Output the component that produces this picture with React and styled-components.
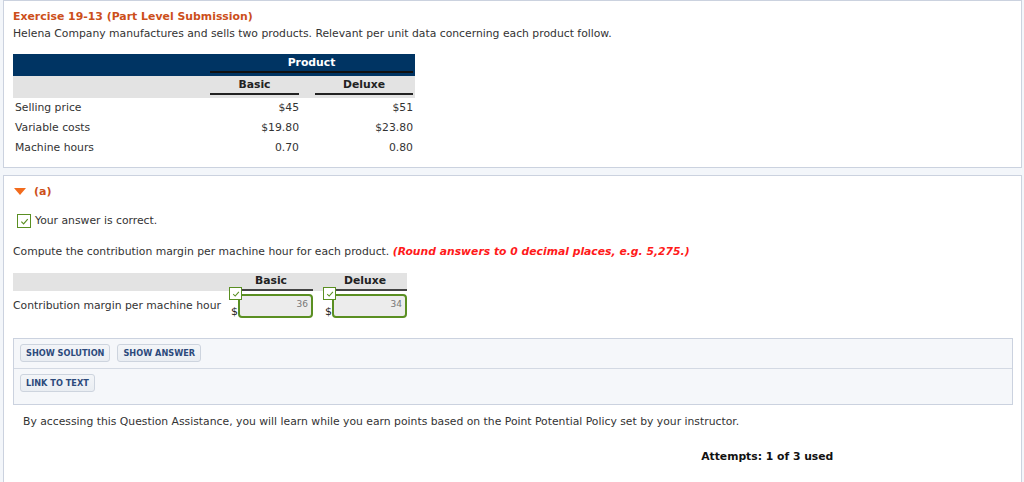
import React from "react";
import styled, { createGlobalStyle } from "styled-components";

const GlobalStyle = createGlobalStyle`
  html, body {
    margin: 0;
    background: #f3f6fa;
  }
  body {
    font-family: "DejaVu Sans", Verdana, sans-serif;
    font-size: 10.8px;
    color: #333;
  }
`;

const Page = styled.div`
  padding: 0 2px 0 3px;
  display: flex;
  flex-direction: column;
  gap: 7px;
`;

const Panel = styled.div`
  background: #fff;
  border: 1px solid #cbd2df;
  padding: ${(p) => p.$pad || "8px 9px 9px 9px"};
`;

const Title = styled.div`
  color: #cc4f1a;
  font-weight: bold;
  font-size: 10.9px;
  line-height: 16px;
`;

const Text = styled.div`
  line-height: 16px;
  margin-top: ${(p) => p.$mt || 0}px;
`;

const DataTable = styled.div`
  width: 402px;
  margin-top: 12px;
`;

const Row = styled.div`
  display: grid;
  grid-template-columns: 195px 89px 114px;
  background: ${(p) => p.$bg || "transparent"};
  height: ${(p) => p.$h || 20}px;
  line-height: ${(p) => p.$lh || 20}px;
  padding-left: 2px;
`;

const ProductCell = styled.div`
  grid-column: 2 / 4;
  text-align: center;
  color: #fff;
  font-weight: bold;
  line-height: 16px;
  padding-top: 1px;
  height: 16px;
  border-bottom: 2px solid #111;
`;

const HeadCell = styled.div`
  text-align: center;
  font-weight: bold;
  color: #222;
  line-height: 16px;
  padding-top: 1px;
  height: 16px;
  border-bottom: 2px solid #222;
  margin-left: ${(p) => (p.$gap ? 16 : 0)}px;
`;

const ValueCell = styled.div`
  text-align: right;
  margin-left: ${(p) => (p.$gap ? 16 : 0)}px;
`;

const PartHead = styled.div`
  display: flex;
  align-items: center;
  gap: 8px;
  height: 16px;
  margin-left: 1px;
`;

const Triangle = styled.span`
  width: 0;
  height: 0;
  border-left: 6px solid transparent;
  border-right: 6px solid transparent;
  border-top: 7px solid #f26b1d;
`;

const PartLabel = styled.span`
  color: #cc4f1a;
  font-weight: bold;
  font-size: 11px;
`;

const Correct = styled.div`
  display: flex;
  align-items: center;
  gap: 4px;
  margin-top: 14px;
  margin-left: 4px;
  line-height: 16px;
`;

const CheckBox = styled.span`
  display: inline-flex;
  align-items: center;
  justify-content: center;
  box-sizing: border-box;
  width: ${(p) => p.$size || 14}px;
  height: ${(p) => p.$size || 14}px;
  border: ${(p) => (p.$thin ? 1 : 1.5)}px solid #5a8f22;
  background: #fff;
`;

const Warn = styled.span`
  color: #ff1a1a;
  font-style: italic;
  font-weight: bold;
`;

const InputTable = styled.div`
  width: 394px;
  margin-top: 13px;
`;

const InputHead = styled.div`
  display: grid;
  grid-template-columns: 216px 84px 10px 84px;
  background: #e3e3e3;
  height: 18px;
`;

const InputHeadCell = styled.div`
  grid-column: ${(p) => p.$col};
  text-align: center;
  font-weight: bold;
  color: #222;
  line-height: 16px;
  height: 16px;
  border-bottom: 2px solid #444;
`;

const InputRow = styled.div`
  display: grid;
  grid-template-columns: 216px 84px 10px 84px;
  height: 30px;
  align-items: start;
`;

const RowLabel = styled.div`
  line-height: 16px;
  padding-top: 7px;
`;

const AnswerCell = styled.div`
  grid-column: ${(p) => p.$col};
  position: relative;
  display: flex;
  align-items: flex-end;
  height: 27px;
  padding-left: 2px;
`;

const Badge = styled.span`
  position: absolute;
  top: -4px;
  left: 0;
`;

const Dollar = styled.span`
  font-size: 11px;
  line-height: 12px;
  color: #222;
`;

const AnswerBox = styled.div`
  flex: 1;
  box-sizing: border-box;
  height: 24px;
  border: 2px solid #5a8f22;
  border-radius: 4px;
  background: #ececec;
  color: #777;
  font-size: 9px;
  text-align: right;
  padding: 2px 3px 0 0;
  line-height: 12px;
`;

const HelpPanel = styled.div`
  margin-top: 17px;
  width: 998px;
  background: #f5f7fa;
  border: 1px solid #cbd2df;
`;

const HelpRow = styled.div`
  display: flex;
  gap: 7px;
  padding: ${(p) => p.$pad};
  border-top: ${(p) => (p.$divider ? "1px solid #d3d9e3" : "none")};
`;

const HelpButton = styled.button`
  font-family: "DejaVu Sans", Verdana, sans-serif;
  font-size: 8.2px;
  font-weight: bold;
  color: #2c4a7c;
  background: linear-gradient(#f3f5f8, #e9edf2);
  border: 1px solid #cdd4de;
  border-radius: 3px;
  height: 18px;
  padding: 0 5px;
  line-height: 16px;
  cursor: pointer;
`;

const Note = styled.div`
  margin: 9px 0 0 10px;
  line-height: 16px;
`;

const Footer = styled.div`
  display: grid;
  grid-template-columns: 1fr 1fr;
  margin-top: 19px;
  height: 50px;
`;

const Attempts = styled.div`
  grid-column: 2;
  text-align: center;
  font-weight: bold;
  color: #111;
  line-height: 16px;
  padding-left: 10px;
`;

const Check = ({ size = 14, thin }) => (
  <CheckBox $size={size} $thin={thin}>
    <svg width={size - 5} height={size - 5} viewBox="0 0 10 10">
      <path d="M1.5 5.2 L4 7.6 L8.6 2.4" fill="none" stroke="#5a8f22" strokeWidth="1.3" />
    </svg>
  </CheckBox>
);

const rows = [
  ["Selling price", "$45", "$51"],
  ["Variable costs", "$19.80", "$23.80"],
  ["Machine hours", "0.70", "0.80"],
];

const answers = [
  { col: 2, value: "36" },
  { col: 4, value: "34" },
];

const App = () => {
  return (
    <>
      <GlobalStyle />
      <Page>
        <Panel>
          <Title>Exercise 19-13 (Part Level Submission)</Title>
          <Text $mt={1}>
            Helena Company manufactures and sells two products. Relevant per unit data concerning each product follow.
          </Text>
          <DataTable>
            <Row $bg="#003463" $h={22}>
              <ProductCell>Product</ProductCell>
            </Row>
            <Row $bg="#e3e3e3" $h={22}>
              <div />
              <HeadCell>Basic</HeadCell>
              <HeadCell $gap>Deluxe</HeadCell>
            </Row>
            {rows.map(([label, basic, deluxe]) => (
              <Row key={label}>
                <div>{label}</div>
                <ValueCell>{basic}</ValueCell>
                <ValueCell $gap>{deluxe}</ValueCell>
              </Row>
            ))}
          </DataTable>
        </Panel>

        <Panel $pad="7px 9px 0 9px">
          <PartHead>
            <Triangle />
            <PartLabel>(a)</PartLabel>
          </PartHead>
          <Correct>
            <Check />
            <span>Your answer is correct.</span>
          </Correct>
          <Text $mt={15}>
            Compute the contribution margin per machine hour for each product.{" "}
            <Warn>(Round answers to 0 decimal places, e.g. 5,275.)</Warn>
          </Text>
          <InputTable>
            <InputHead>
              <InputHeadCell $col={2}>Basic</InputHeadCell>
              <InputHeadCell $col={4}>Deluxe</InputHeadCell>
            </InputHead>
            <InputRow>
              <RowLabel>Contribution margin per machine hour</RowLabel>
              {answers.map((a) => (
                <AnswerCell key={a.col} $col={a.col}>
                  <Badge>
                    <Check size={13} thin />
                  </Badge>
                  <Dollar>$</Dollar>
                  <AnswerBox>{a.value}</AnswerBox>
                </AnswerCell>
              ))}
            </InputRow>
          </InputTable>
          <HelpPanel>
            <HelpRow $pad="5px 6px 6px 6px">
              <HelpButton>SHOW SOLUTION</HelpButton>
              <HelpButton>SHOW ANSWER</HelpButton>
            </HelpRow>
            <HelpRow $divider $pad="5px 6px 12px 6px">
              <HelpButton>LINK TO TEXT</HelpButton>
            </HelpRow>
          </HelpPanel>
          <Note>
            By accessing this Question Assistance, you will learn while you earn points based on the Point Potential Policy set by your instructor.
          </Note>
          <Footer>
            <Attempts>Attempts: 1 of 3 used</Attempts>
          </Footer>
        </Panel>
      </Page>
    </>
  );
};

export default App;
